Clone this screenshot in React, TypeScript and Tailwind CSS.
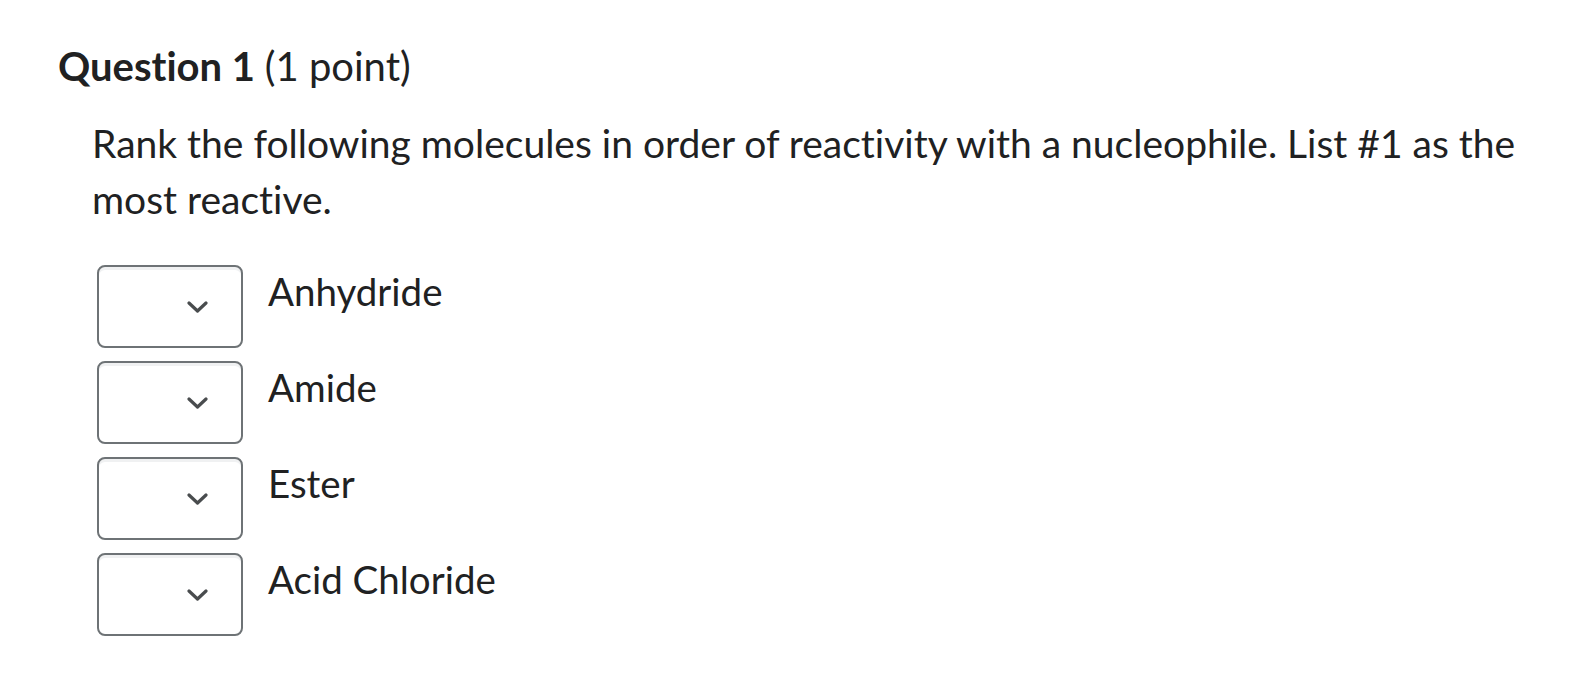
import React from "react";

const items = ["Anhydride", "Amide", "Ester", "Acid Chloride"];

function Chevron() {
  return (
    <svg
      width="21"
      height="12"
      viewBox="0 0 21 12"
      className="absolute right-[33px] top-1/2 -translate-y-1/2"
      aria-hidden="true"
    >
      <path
        d="M2 2 L10.5 10 L19 2"
        fill="none"
        stroke="#494c4e"
        strokeWidth="3.2"
        strokeLinecap="round"
        strokeLinejoin="round"
      />
    </svg>
  );
}

function RankSelect() {
  return (
    <div className="relative w-[146px] h-[83px] shrink-0 rounded-[8px] border-2 border-[#6e7376] bg-white shadow-[inset_0_3px_0_0_#f0f1f2]">
      <Chevron />
    </div>
  );
}

export default function App() {
  return (
    <div className="w-[1586px] h-[678px] bg-white text-[#202122] font-['Lato','Noto_Sans',sans-serif] [font-variant-ligatures:none] overflow-hidden">
      <div className="pl-[58px] pt-[42px]">
        <h2 className="text-[40px] leading-[48px] font-bold">
          Question 1 <span className="font-normal">(1 point)</span>
        </h2>
        <div className="pl-[34px] mt-[25px]">
          <p className="text-[39px] leading-[56px] w-[1470px]">
            Rank the following molecules in order of reactivity with a nucleophile. List #1 as the most reactive.
          </p>
          <div className="mt-[38px] pl-[5px] flex flex-col gap-[13px]">
            {items.map((name) => (
              <div key={name} className="flex items-start gap-[25px]">
                <RankSelect />
                <span className="text-[38.5px] leading-[52px]">{name}</span>
              </div>
            ))}
          </div>
        </div>
      </div>
    </div>
  );
}
